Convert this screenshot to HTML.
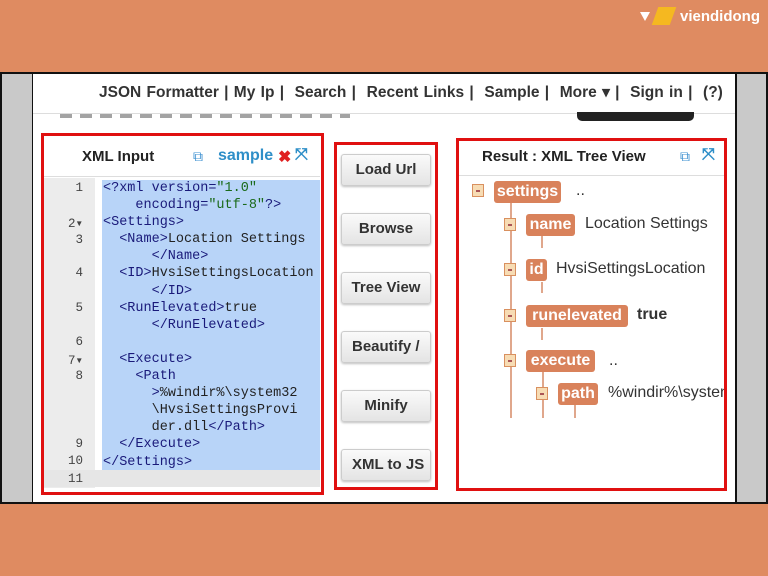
<!DOCTYPE html>
<html><head><meta charset="utf-8"><style>
*{margin:0;padding:0;box-sizing:border-box}
body{width:768px;height:576px;background:#df8b61;position:relative;overflow:hidden;font-family:"Liberation Sans",Arial,sans-serif}
.a{position:absolute}
.mono{font-family:"Liberation Mono","DejaVu Sans Mono",monospace;font-size:13.5px;color:#1a1a7a}
.ln{position:absolute;left:43px;width:40px;text-align:right;font-family:"Liberation Mono",monospace;font-size:12.5px;color:#444}
.btn{position:absolute;left:341px;width:90px;height:32px;border:1px solid #ccc;border-radius:3px;background:linear-gradient(#fafafa,#e4e4e4);font-weight:bold;font-size:15px;color:#333;text-align:center;line-height:30px;box-shadow:0 1px 2px rgba(0,0,0,.25);overflow:hidden;white-space:nowrap}
.node{position:absolute;height:22px;background:#d9825b;color:#fff;font-weight:bold;font-size:16px;line-height:22px;text-align:center;border-radius:3px;white-space:nowrap;overflow:hidden}
.mi{position:absolute;width:12px;height:13px;background:#f7dcb4;border:1px solid #d9905f}
.mi:after{content:"";position:absolute;left:3px;top:5px;width:4px;height:2px;background:#a55}
.vl{position:absolute;width:2px;background:#e0a78c}
.val{position:absolute;font-size:16px;color:#333;white-space:nowrap}
</style></head><body>
<div class="a" style="left:680px;top:8px;color:#fff;font-size:15px;font-weight:bold">viendidong</div>
<div class="a" style="left:640px;top:12px;width:10px;height:9px;background:#fff;clip-path:polygon(0 0,100% 0,50% 100%)"></div>
<div class="a" style="left:655px;top:7px;width:18px;height:18px;background:#f5b820;transform:skewX(-20deg)"></div>
<div class="a" style="left:0;top:72px;width:768px;height:432px;background:#111"></div>
<div class="a" style="left:2px;top:74px;width:30px;height:428px;background:#c9c9c9"></div>
<div class="a" style="left:737px;top:74px;width:29px;height:428px;background:#c9c9c9"></div>
<div class="a" style="left:33px;top:74px;width:702px;height:428px;background:#fff"></div>
<div class="a" style="left:99px;top:83px;font-size:15.5px;font-weight:bold;color:#333;white-space:nowrap;word-spacing:1px">JSON Formatter | My Ip |&nbsp; Search |&nbsp; Recent Links |&nbsp; Sample |&nbsp; More ▾ |&nbsp; Sign in |&nbsp; (?)</div>
<div class="a" style="left:33px;top:113px;width:702px;height:1px;background:#ddd"></div>
<div class="a" style="left:60px;top:114px;width:290px;height:4px;background:repeating-linear-gradient(90deg,#666 0 12px,transparent 12px 20px);opacity:.6"></div>
<div class="a" style="left:577px;top:112px;width:117px;height:9px;background:#222;border-radius:0 0 5px 5px"></div>
<div class="a" style="left:43px;top:178px;width:52px;height:310px;background:#ececec"></div>
<div class="a" style="left:102px;top:180px;width:218px;height:290px;background:#b8d4f8"></div>
<div class="a" style="left:43px;top:470px;width:277px;height:17px;background:#e6e6e6"></div>
<div class="a" style="left:43px;top:176px;width:277px;height:1px;background:#ddd"></div>
<div class="a" style="left:82px;top:148px;font-weight:bold;font-size:15px;color:#222">XML Input</div>
<div class="a" style="left:193px;top:148px;font-size:14px;color:#3a8fd0">⧉</div>
<div class="a" style="left:218px;top:147px;font-weight:bold;font-size:16px;color:#2f8fc8">sample</div>
<div class="a" style="left:278px;top:147px;font-weight:bold;font-size:16px;color:#e02020">✖</div>
<div class="a" style="left:295px;top:146px;font-weight:bold;font-size:16px;color:#2f8fc8">⤧</div>
<div class="ln" style="top:181px">1</div><div class="ln" style="top:215px">2▾</div><div class="ln" style="top:233px">3</div><div class="ln" style="top:266px">4</div><div class="ln" style="top:301px">5</div><div class="ln" style="top:335px">6</div><div class="ln" style="top:352px">7▾</div><div class="ln" style="top:369px">8</div><div class="ln" style="top:437px">9</div><div class="ln" style="top:454px">10</div><div class="ln" style="top:472px">11</div>
<pre class="a mono" style="left:103px;top:180px;line-height:17.1px">&lt;?xml version=<span style="color:#1a6a1a">"1.0"</span>
    encoding=<span style="color:#1a6a1a">"utf-8"</span>?&gt;
&lt;Settings&gt;
  &lt;Name&gt;<span style="color:#222">Location Settings</span>
      &lt;/Name&gt;
  &lt;ID&gt;<span style="color:#222">HvsiSettingsLocation</span>
      &lt;/ID&gt;
  &lt;RunElevated&gt;<span style="color:#222">true</span>
      &lt;/RunElevated&gt;

  &lt;Execute&gt;
    &lt;Path
      &gt;<span style="color:#222">%windir%\system32
      \HvsiSettingsProvi
      der.dll</span>&lt;/Path&gt;
  &lt;/Execute&gt;
&lt;/Settings&gt;</pre>
<div class="a" style="left:41px;top:133px;width:283px;height:362px;border:3px solid #e01010"></div>
<div class="btn" style="top:154px">Load Url</div>
<div class="btn" style="top:213px">Browse</div>
<div class="btn" style="top:272px">Tree View</div>
<div class="btn" style="top:331px;text-indent:10px;text-align:left">Beautify /</div>
<div class="btn" style="top:390px">Minify</div>
<div class="btn" style="top:449px;text-indent:10px;text-align:left">XML to JS</div>
<div class="a" style="left:334px;top:142px;width:104px;height:348px;border:3px solid #e01010"></div>
<div class="a" style="left:458px;top:175px;width:266px;height:1px;background:#ddd"></div>
<div class="a" style="left:482px;top:148px;font-weight:bold;font-size:15px;color:#222">Result : XML Tree View</div>
<div class="a" style="left:680px;top:148px;font-size:14px;color:#3a8fd0">⧉</div>
<div class="a" style="left:702px;top:146px;font-weight:bold;font-size:16px;color:#2f8fc8">⤧</div>
<div class="vl" style="left:510px;top:202px;height:216px"></div>
<div class="vl" style="left:541px;top:236px;height:12px"></div>
<div class="vl" style="left:541px;top:282px;height:11px"></div>
<div class="vl" style="left:541px;top:328px;height:12px"></div>
<div class="vl" style="left:542px;top:372px;height:46px"></div>
<div class="vl" style="left:574px;top:405px;height:13px"></div>
<div class="mi" style="left:472px;top:184px"></div><div class="node" style="left:494px;top:181px;width:67px">settings</div><div class="val" style="left:576px;top:182px">..</div>
<div class="mi" style="left:504px;top:218px"></div><div class="node" style="left:526px;top:214px;width:49px">name</div><div class="val" style="left:585px;top:215px">Location Settings</div>
<div class="mi" style="left:504px;top:263px"></div><div class="node" style="left:526px;top:259px;width:21px">id</div><div class="val" style="left:556px;top:260px">HvsiSettingsLocation</div>
<div class="mi" style="left:504px;top:309px"></div><div class="node" style="left:526px;top:305px;width:102px">runelevated</div><div class="val" style="left:637px;top:306px;font-weight:bold">true</div>
<div class="mi" style="left:504px;top:354px"></div><div class="node" style="left:526px;top:350px;width:69px">execute</div><div class="val" style="left:609px;top:352px">..</div>
<div class="mi" style="left:536px;top:387px"></div><div class="node" style="left:558px;top:383px;width:40px">path</div><div class="val" style="left:608px;top:384px;width:117px;overflow:hidden">%windir%\system32</div>
<div class="a" style="left:456px;top:138px;width:271px;height:353px;border:3px solid #e01010"></div>
</body></html>
